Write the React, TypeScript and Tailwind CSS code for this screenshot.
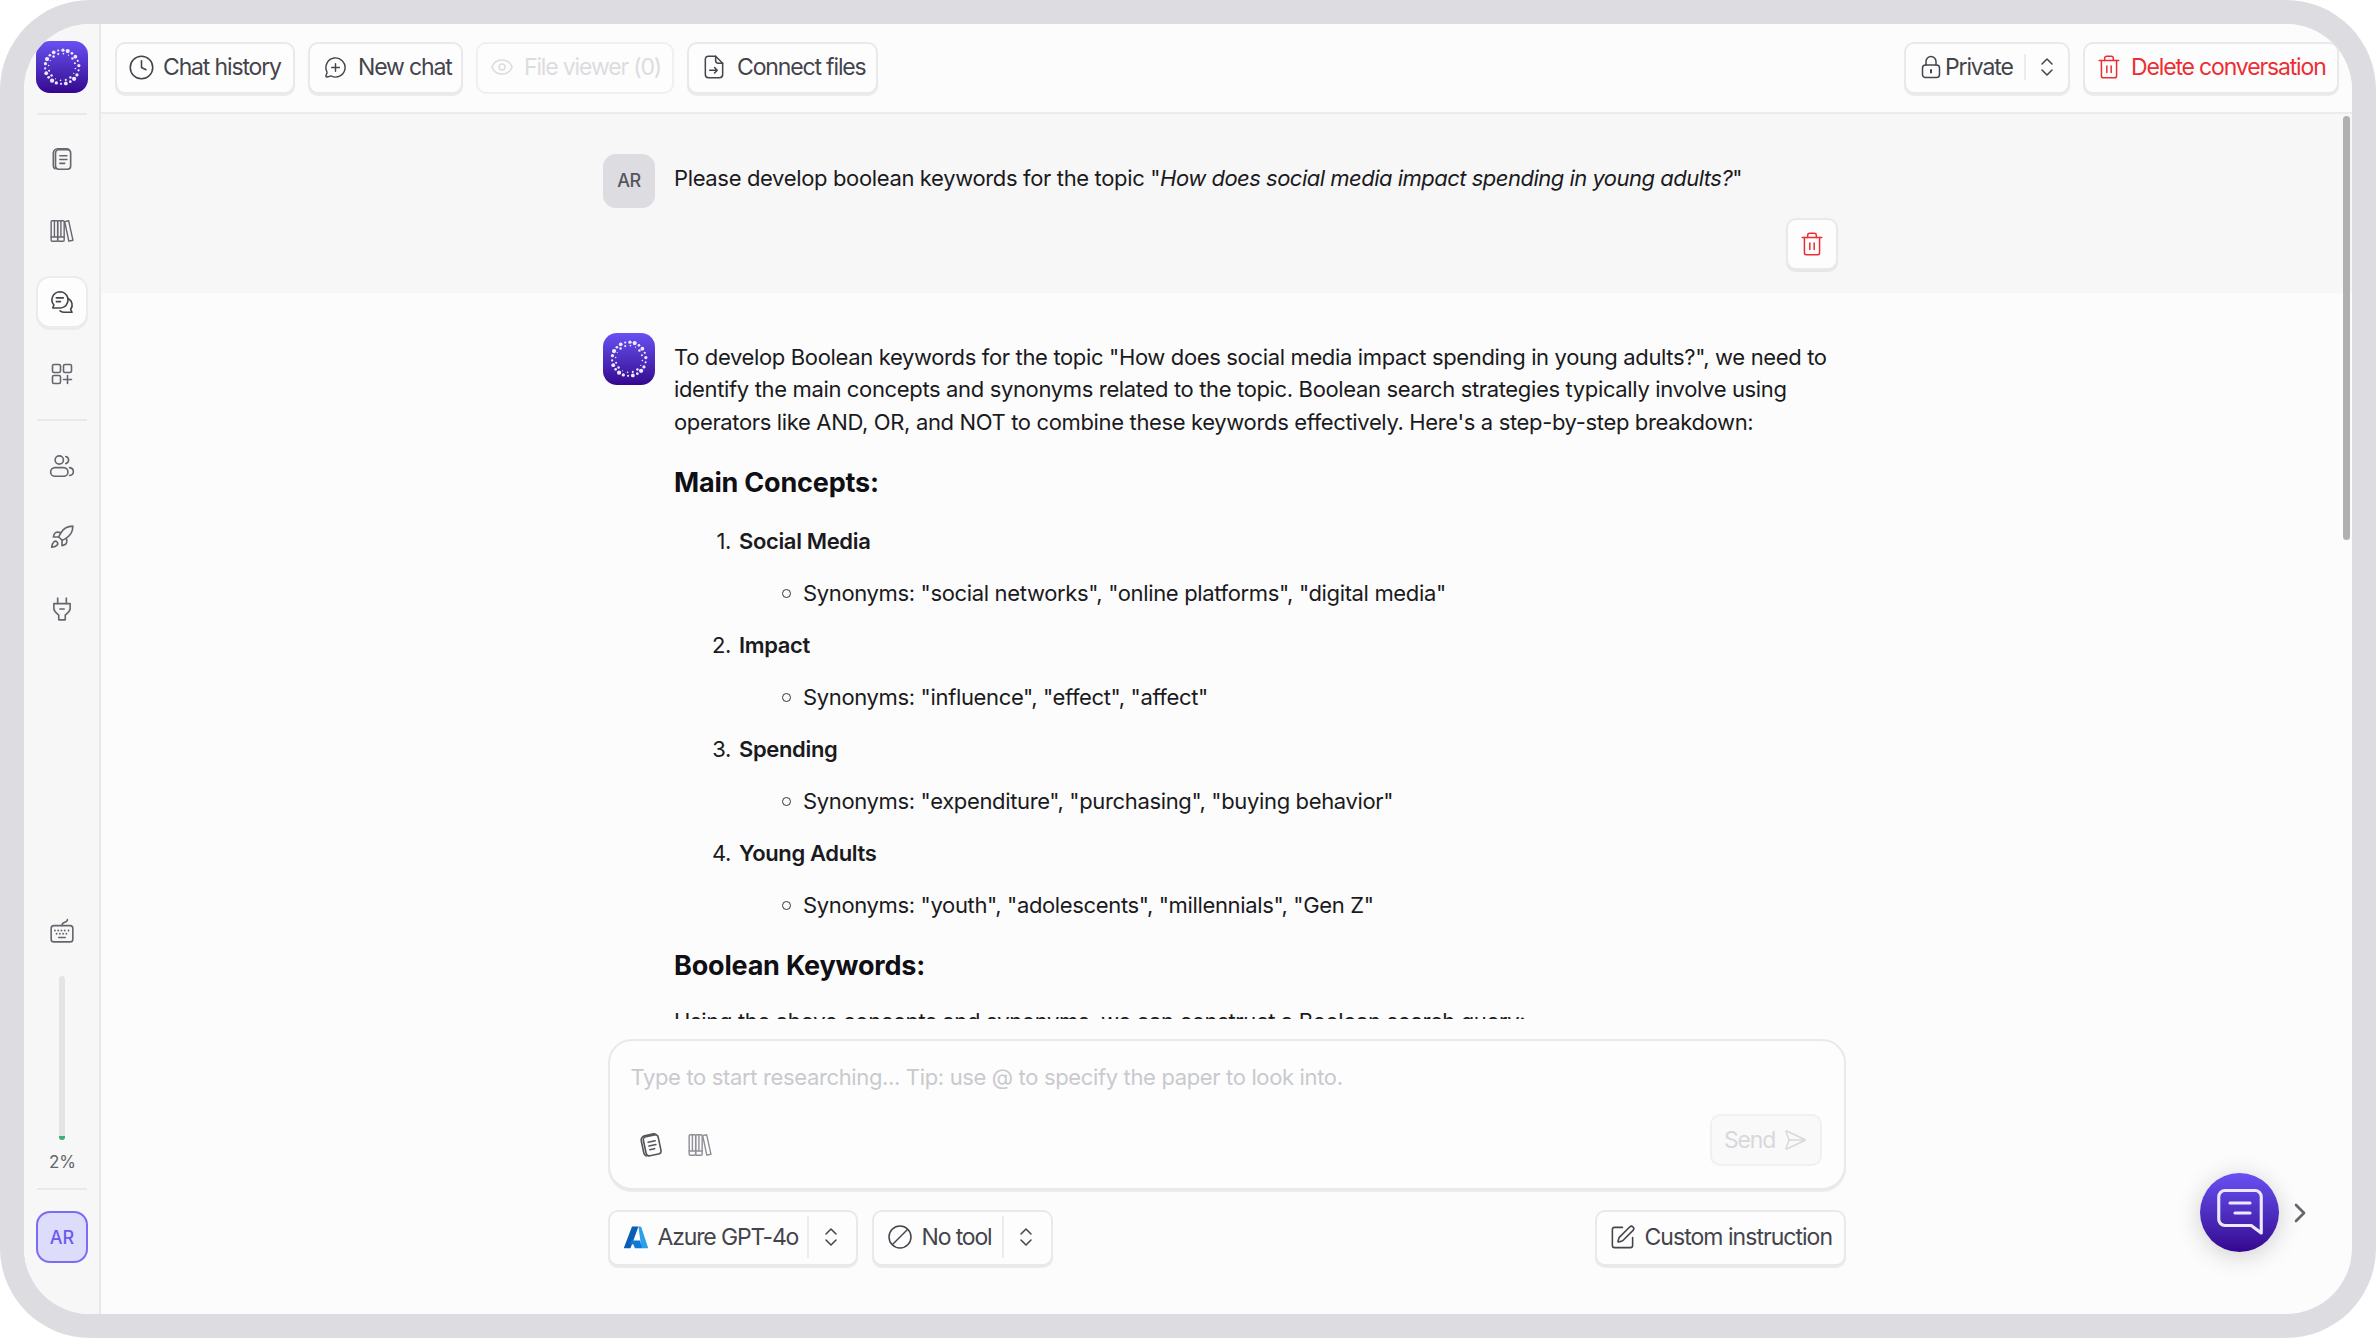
import { ChevronRight, ChevronsUpDown, Clock, Eye, MessageCirclePlus, Rocket, SendHorizontal, SquarePen, Trash2 } from 'lucide-react'
import type { ReactNode } from 'react'

// the logo ring: a row of big dots with a scatter of small ones inside it
const outerDots = Array.from({ length: 22 }, (_, i) => {
  const a = (i / 22) * Math.PI * 2 + 0.2
  return { x: 24 + Math.cos(a) * 15.6, y: 24 + Math.sin(a) * 15.6, s: 1 + ((i * 7) % 5) * 0.24 }
})
const innerDots = Array.from({ length: 16 }, (_, i) => {
  const a = (i / 16) * Math.PI * 2 + 0.5
  return { x: 24 + Math.cos(a) * 12.4, y: 24 + Math.sin(a) * 12.4, s: 0.55 + ((i * 3) % 4) * 0.2 }
})

function Logo({ className }: { className: string }) {
  return (
    <div className={`shrink-0 rounded-[14px] bg-gradient-to-b from-[#6a50f4] to-[#35058f] ${className}`}>
      <svg viewBox="0 0 48 48" className="h-full w-full" fill="#eeebff">
        {[...outerDots, ...innerDots].map((d, i) => (
          <circle key={i} cx={d.x} cy={d.y} r={d.s} />
        ))}
      </svg>
    </div>
  )
}

function DocsIcon({ className = 'h-[26px] w-[26px]' }: { className?: string }) {
  return (
    <svg viewBox="0 0 24 24" className={className} fill="none" stroke="currentColor" strokeWidth="1.5" strokeLinecap="round" strokeLinejoin="round">
      <path d="M18.500 3.500a2.500 2.500 0 0 0-2-1H8a4 4 0 0 0-4 4V18a3.500 3.500 0 0 0 1.500 3" />
      <rect x="6" y="3.500" width="14" height="18" rx="3" />
      <path d="M10 9h6.500M10 12.500h6.500M10 16h4.500" />
    </svg>
  )
}

function BooksIcon({ className = 'h-[26px] w-[26px]' }: { className?: string }) {
  return (
    <svg viewBox="0 0 24 24" className={className} fill="none" stroke="currentColor" strokeWidth="1.3" strokeLinecap="round" strokeLinejoin="round">
      <rect x="2" y="2.500" width="6" height="19" rx="1" />
      <rect x="8" y="2.500" width="6" height="19" rx="1" />
      <path d="M2 17.500h12M5 2.500v15M11 2.500v15" />
      <path d="m14.500 3.300 3.600-.8 4 18-3.800.9z" />
    </svg>
  )
}

function ChatsIcon() {
  return (
    <svg viewBox="0 0 24 24" className="h-[26px] w-[26px]" fill="none" stroke="currentColor" strokeWidth="1.5" strokeLinecap="round" strokeLinejoin="round">
      <path d="M10 2.500a7.500 7.500 0 0 1 7 10.200 7.500 7.500 0 0 1-7 4.800H3.500l1-2.700A7.500 7.500 0 0 1 10 2.500z" />
      <path d="M6.800 8.200h6.400M6.800 11.600h3.800" />
      <path d="M17.600 8.800a6.600 6.600 0 0 1 2.400 10l1.200 2.700h-7a6.600 6.600 0 0 1-4-1.400" />
    </svg>
  )
}

function GridPlusIcon() {
  return (
    <svg viewBox="0 0 24 24" className="h-6 w-6" fill="none" stroke="currentColor" strokeWidth="1.6" strokeLinecap="round" strokeLinejoin="round">
      <rect x="2.500" y="2.500" width="8" height="8" rx="1.500" />
      <rect x="13.500" y="2.500" width="8" height="8" rx="1.500" />
      <rect x="2.500" y="13.500" width="8" height="8" rx="1.500" />
      <path d="M13.500 17.500h8M17.500 13.500v8" />
    </svg>
  )
}

function PeopleIcon() {
  return (
    <svg viewBox="0 0 24 24" className="h-[26px] w-[26px]" fill="none" stroke="currentColor" strokeWidth="1.5" strokeLinecap="round" strokeLinejoin="round">
      <circle cx="9.500" cy="6.500" r="3.800" />
      <rect x="1.500" y="13.500" width="16" height="8" rx="4" />
      <path d="M15.500 3.200a3.400 3.400 0 0 1 0 6.600M19 13.500c2.200.4 3.500 2 3.500 3.700s-1.300 3.200-3.500 3.600" />
    </svg>
  )
}

function PlugIcon() {
  return (
    <svg viewBox="0 0 24 24" className="h-[26px] w-[26px]" fill="none" stroke="currentColor" strokeWidth="1.5" strokeLinecap="round" strokeLinejoin="round">
      <path d="M8 2v5M16 2v5" />
      <path d="M4.500 7h15v4.500c0 3-3 4.500-4.500 6v4.500H9v-4.500c-1.500-1.500-4.500-3-4.500-6z" />
      <path d="M10 12h4" />
    </svg>
  )
}

function KeyboardIcon() {
  return (
    <svg viewBox="0 0 24 24" className="h-[26px] w-[26px]" fill="none" stroke="currentColor" strokeWidth="1.5" strokeLinecap="round" strokeLinejoin="round">
      <rect x="2" y="7" width="20" height="15" rx="2.500" />
      <path d="M12 7c0-2 1-2.500 2.500-3S17 3 17 1.500" />
      <path d="M9 18h6" />
      <path d="M5.500 11.500h.01M8.500 11.500h.01M11.500 11.500h.01M14.500 11.500h.01M18 11.500h.01M7 14.500h.01M10 14.500h.01M13 14.500h.01M16 14.500h.01" strokeWidth="1.700" />
    </svg>
  )
}

function ConnectFileIcon() {
  return (
    <svg viewBox="0 0 24 24" className="h-[26px] w-[26px]" fill="none" stroke="currentColor" strokeWidth="1.4" strokeLinecap="round" strokeLinejoin="round">
      <path d="M13.500 2H7a3 3 0 0 0-3 3v14a3 3 0 0 0 3 3h10a3 3 0 0 0 3-3V8.500z" />
      <path d="M13.500 2v4a2.500 2.500 0 0 0 2.500 2.500h4" />
      <path d="M8 15h7M12.500 12.500 15 15l-2.500 2.500" />
    </svg>
  )
}

function LockIcon() {
  return (
    <svg viewBox="0 0 24 24" className="h-[24px] w-[24px] shrink-0" fill="none" stroke="currentColor" strokeWidth="1.5" strokeLinecap="round" strokeLinejoin="round">
      <rect x="3.500" y="10" width="17" height="12.500" rx="3" />
      <path d="M7 10V6.500a5 5 0 0 1 10 0V10" />
      <path d="M12 15v2.500" strokeWidth="2" />
    </svg>
  )
}

function NoToolIcon() {
  return (
    <svg viewBox="0 0 24 24" className="h-[24px] w-[24px] shrink-0" fill="none" stroke="currentColor" strokeWidth="1.500" strokeLinecap="round">
      <circle cx="12" cy="12" r="11" />
      <path d="M4.500 19.500 19.500 4.500" />
    </svg>
  )
}

function AzureLogo() {
  return (
    <svg viewBox="0 0 24 22" className="h-[23px] w-[24px] shrink-0">
      <path d="M8 0h6.500L6.700 21.200a1 1 0 0 1-.9.600H.7a.7.7 0 0 1-.6-1z" fill="#0a5fb4" />
      <path d="M14.500 0h1.800a1 1 0 0 1 1 .7L24 20.900a.7.7 0 0 1-.7.9h-6z" fill="#2aa0ea" />
      <path d="M7 14h9l2 7.800H11l-1.800-4H6z" fill="#1079d2" />
    </svg>
  )
}

function ToolButton({ children, className = '' }: { children: ReactNode; className?: string }) {
  return (
    <div className={`flex shrink-0 items-center whitespace-nowrap rounded-[10px] border-2 bg-[#fdfdfd] pb-[2px] text-[23px] tracking-[-0.05em] ${className}`}>
      {children}
    </div>
  )
}

const buttonTone = 'border-[#e9e9ec] text-[#44444c] shadow-[0_2px_1px_rgba(0,0,0,0.07)]'

function RailIcon({ children, active = false }: { children: ReactNode; active?: boolean }) {
  return (
    <div className={`flex h-[52px] w-[52px] items-center justify-center rounded-[14px] ${active ? 'border-2 border-[#ececee] bg-[#fdfdfd] text-[#44444c] shadow-[0_2px_1px_rgba(0,0,0,0.05)]' : 'text-[#66666e]'}`}>
      {children}
    </div>
  )
}

function Concept({ n, title, synonyms }: { n: number; title: string; synonyms: string }) {
  return (
    <div className="flex flex-col">
      <div className="flex h-[32px] items-center">
        <span className="w-[65px] pr-[8px] text-right">{n}.</span>
        <b className="font-semibold">{title}</b>
      </div>
      <div className="mt-[20px] flex h-[32px] items-center pl-[108px]">
        <span className="mr-[12px] h-[9px] w-[9px] rounded-full border border-[#33333a]" />
        <span>Synonyms: {synonyms}</span>
      </div>
    </div>
  )
}

export default function App() {
  return (
    <div className="h-[1338px] w-[2376px] overflow-hidden bg-white" style={{ fontFamily: 'Inter, sans-serif' }}>
      <div className="h-full w-full rounded-[90px] bg-[#dcdce1] p-[24px]">
        <div className="flex h-full w-full overflow-hidden rounded-[66px] bg-[#fcfcfc]">
          {/* Sidebar */}
          <aside className="flex w-[77px] shrink-0 flex-col items-center border-r-2 border-[#e9e9ec] bg-[#f7f7f8] pl-[1px]">
            <Logo className="mt-[17px] h-[52px] w-[52px]" />
            <div className="mt-[20px] h-[2px] w-[50px] bg-[#e9e9ec]" />
            <div className="mt-[18px] flex flex-col gap-[19.5px]">
              <RailIcon><DocsIcon /></RailIcon>
              <RailIcon><BooksIcon /></RailIcon>
              <RailIcon active><ChatsIcon /></RailIcon>
              <RailIcon><GridPlusIcon /></RailIcon>
            </div>
            <div className="mt-[19px] h-[2px] w-[50px] bg-[#e9e9ec]" />
            <div className="mt-[19px] flex flex-col gap-[19.5px]">
              <RailIcon><PeopleIcon /></RailIcon>
              <RailIcon><Rocket className="h-[26px] w-[26px]" strokeWidth={1.5} /></RailIcon>
              <RailIcon><PlugIcon /></RailIcon>
            </div>
            <div className="mt-auto flex flex-col items-center">
              <RailIcon><KeyboardIcon /></RailIcon>
              <div className="mt-[19px] flex h-[164px] w-[6px] items-end overflow-hidden rounded-full bg-[#e4e4e7]">
                <div className="h-[4px] w-full bg-[#3fae7a]" />
              </div>
              <div className="ml-[1px] mt-[11px] text-[17px] leading-[22px] text-[#66666e]">2%</div>
              <div className="mt-[15px] h-[2px] w-[50px] bg-[#e9e9ec]" />
              <div className="mb-[51px] mt-[21px] flex h-[52px] w-[52px] items-center justify-center rounded-[14px] border-2 border-[#7c6cf4] bg-[#dedcfb] text-[18px] font-medium text-[#6a5af0]">AR</div>
            </div>
          </aside>

          {/* Main */}
          <main className="relative flex min-w-0 flex-1 flex-col">
            <header className="flex h-[90px] shrink-0 items-center gap-[13px] border-b-2 border-[#ececee] bg-[#fcfcfc] pl-[14px] pr-[13px]">
              <ToolButton className={`h-[52px] w-[180px] gap-[8px] pl-[11px] ${buttonTone}`}><Clock className="h-[27px] w-[27px]" strokeWidth={1.4} />Chat history</ToolButton>
              <ToolButton className={`h-[52px] w-[155px] gap-[11px] pl-[14px] ${buttonTone}`}><MessageCirclePlus className="h-[23px] w-[23px]" strokeWidth={1.5} />New chat</ToolButton>
              <ToolButton className="h-[52px] w-[198px] gap-[10px] border-[#f0f0f2] pl-[12px] text-[#dcdce0]"><Eye className="h-6 w-6" strokeWidth={1.5} />File viewer (0)</ToolButton>
              <ToolButton className={`h-[52px] w-[191px] gap-[10px] pl-[12px] ${buttonTone}`}><ConnectFileIcon />Connect files</ToolButton>
              <ToolButton className={`ml-auto h-[52px] w-[166px] pl-[13px] ${buttonTone}`}>
                <LockIcon />
                <span className="ml-[2px] flex-1">Private</span>
                <span className="h-[26px] w-[2px] bg-[#ececee]" />
                <ChevronsUpDown className="mx-[9px] h-6 w-6" strokeWidth={1.5} />
              </ToolButton>
              <ToolButton className="h-[52px] w-[256px] gap-[9px] border-[#e9e9ec] pl-[11px] text-[#ee2d33] shadow-[0_2px_1px_rgba(0,0,0,0.07)]"><Trash2 className="h-[26px] w-[26px]" strokeWidth={1.4} />Delete conversation</ToolButton>
            </header>

            <div className="min-h-0 flex-1 overflow-hidden text-[22px] leading-[32.4px] tracking-[-0.016em] text-[#1a1a20]">
              <section className="h-[179px] bg-[#f7f7f8] pr-[12px]">
                <div className="mx-auto flex h-full w-[1235px] gap-[19px] pt-[40px]">
                  <div className="flex h-[54px] w-[52px] shrink-0 items-center justify-center rounded-[13px] bg-[#dcdce1] text-[18px] font-medium text-[#55555d]">AR</div>
                  <div className="flex-1">
                    <div className="mt-[8px]">Please develop boolean keywords for the topic "<i className="tracking-[-0.023em]">How does social media impact spending in young adults?</i>"</div>
                    <div className="mt-[24px] flex justify-end">
                      <div className="flex h-[52px] w-[52px] items-center justify-center rounded-[10px] border-2 border-[#e9e9ec] bg-[#fdfdfd] text-[#ee2d33] shadow-[0_2px_1px_rgba(0,0,0,0.07)]"><Trash2 className="h-[26px] w-[26px]" strokeWidth={1.4} /></div>
                    </div>
                  </div>
                </div>
              </section>
              <section className="pr-[12px]">
                <div className="mx-auto flex w-[1235px] gap-[19px] pt-[40px]">
                  <Logo className="h-[52px] w-[52px]" />
                  <div className="flex-1 pt-[8px]">
                    <p>To develop Boolean keywords for the topic "How does social media impact spending in young adults?", we need to identify the main concepts and synonyms related to the topic. Boolean search strategies typically involve using operators like AND, OR, and NOT to combine these keywords effectively. Here's a step-by-step breakdown:</p>
                    <h2 className="mt-[28px] text-[27px] font-bold leading-[34px] tracking-[-0.2px] text-[#0f0f14]">Main Concepts:</h2>
                    <div className="mt-[25px] flex flex-col gap-[20px]">
                      <Concept n={1} title="Social Media" synonyms={'"social networks", "online platforms", "digital media"'} />
                      <Concept n={2} title="Impact" synonyms={'"influence", "effect", "affect"'} />
                      <Concept n={3} title="Spending" synonyms={'"expenditure", "purchasing", "buying behavior"'} />
                      <Concept n={4} title="Young Adults" synonyms={'"youth", "adolescents", "millennials", "Gen Z"'} />
                    </div>
                    <h2 className="mt-[28px] text-[27px] font-bold leading-[34px] tracking-[-0.2px] text-[#0f0f14]">Boolean Keywords:</h2>
                    <p className="mt-[22px]">Using the above concepts and synonyms, we can construct a Boolean search query:</p>
                  </div>
                </div>
              </section>
            </div>

            <div className="flex h-[295px] shrink-0 flex-col pt-[20px]">
              <div className="mx-auto flex w-[1238px] flex-col gap-[20px]">
                <div className="flex h-[151px] flex-col rounded-[24px] border-2 border-[#e9e9ec] bg-[#fdfdfd] pl-[21px] pr-[22px] pt-[20px] shadow-[0_2px_1px_rgba(0,0,0,0.07)]">
                  <div className="text-[22px] leading-[32px] tracking-[-0.016em] text-[#c9c9ce]">Type to start researching... Tip: use @ to specify the paper to look into.</div>
                  <div className="mt-[21px] flex items-center">
                    <DocsIcon className="ml-[7px] mt-[9px] h-[26px] w-[26px] -rotate-12 text-[#55555d]" />
                    <BooksIcon className="ml-[23px] mt-[9px] h-[26px] w-[26px] text-[#8e8e96]" />
                    <div className="ml-auto flex h-[52px] w-[112px] items-center justify-center gap-[8px] rounded-[10px] border-2 border-[#f0f0f2] bg-[#f9f9fa] text-[23px] tracking-[-0.05em] text-[#d8d8dc]">Send<SendHorizontal className="h-6 w-6" strokeWidth={1.5} /></div>
                  </div>
                </div>
                <div className="flex items-center gap-[14px]">
                  <ToolButton className={`h-[56px] w-[250px] pl-[14px] ${buttonTone}`}>
                    <AzureLogo />
                    <span className="ml-[10px] flex-1">Azure GPT-4o</span>
                    <span className="h-[42px] w-[2px] bg-[#ececee]" />
                    <ChevronsUpDown className="ml-[10px] mr-[13px] h-6 w-6" strokeWidth={1.5} />
                  </ToolButton>
                  <ToolButton className={`h-[56px] w-[181px] pl-[14px] ${buttonTone}`}>
                    <NoToolIcon />
                    <span className="ml-[10px] flex-1">No tool</span>
                    <span className="h-[42px] w-[2px] bg-[#ececee]" />
                    <ChevronsUpDown className="ml-[10px] mr-[13px] h-6 w-6" strokeWidth={1.5} />
                  </ToolButton>
                  <ToolButton className={`ml-auto h-[56px] w-[251px] gap-[9px] pl-[12px] ${buttonTone}`}><SquarePen className="h-[27px] w-[27px]" strokeWidth={1.4} /><span className="tracking-[-0.042em]">Custom instruction</span></ToolButton>
                </div>
              </div>
            </div>

            {/* scrollbar thumb */}
            <div className="absolute right-[2px] top-[92px] h-[424px] w-[7px] rounded-full bg-[#b0b0b0]" />

            {/* floating help button */}
            <div className="absolute bottom-[62px] right-[73px] flex h-[79px] w-[79px] items-center justify-center rounded-full bg-gradient-to-b from-[#6a50f4] to-[#35058f] shadow-[0_4px_24px_rgba(0,0,0,0.18)]">
              <svg viewBox="0 0 48 48" className="h-[60px] w-[60px]" fill="none" stroke="#ece9ff" strokeWidth="2.500" strokeLinecap="round" strokeLinejoin="round">
                <path d="M7 11a5 5 0 0 1 5-5h24a5 5 0 0 1 5 5v29l-8-6H12a5 5 0 0 1-5-5z" />
                <path d="M16 16h16M20 24h12" />
              </svg>
            </div>
            <ChevronRight className="absolute bottom-[85px] right-[36px] h-8 w-8 text-[#66666e]" strokeWidth={2} />
          </main>
        </div>
      </div>
    </div>
  )
}
